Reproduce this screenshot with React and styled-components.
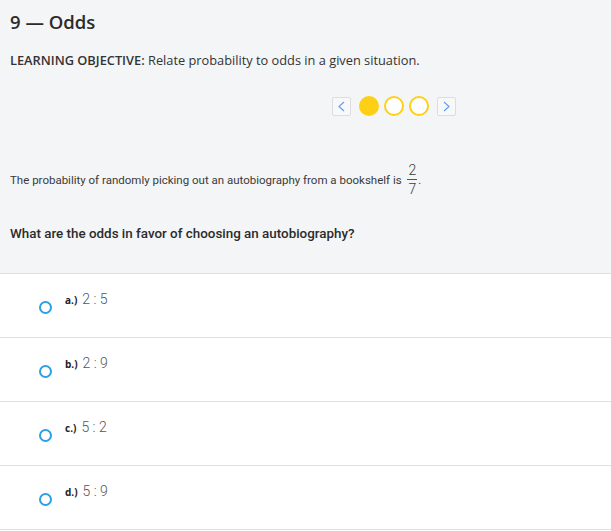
import React, { useState } from 'react';
import styled, { createGlobalStyle } from 'styled-components';

const GlobalStyle = createGlobalStyle`
  body {
    margin: 0;
    background: #ffffff;
    font-family: "Open Sans", sans-serif;
    color: #333;
  }
`;

const options = [
  { key: 'a', text: '2 : 5' },
  { key: 'b', text: '2 : 9' },
  { key: 'c', text: '5 : 2' },
  { key: 'd', text: '5 : 9' },
];

const App = () => {
  const [page, setPage] = useState(0);
  const [picked, setPicked] = useState(null);

  return (
    <>
      <GlobalStyle />
      <Header>
        <Title>9 — Odds</Title>
        <Objective>
          <b>LEARNING OBJECTIVE:</b> Relate probability to odds in a given situation.
        </Objective>
        <Pager>
          <PageButton onClick={() => setPage(Math.max(0, page - 1))}>
            <svg width="9" height="11" viewBox="0 0 9 11">
              <path d="M7 1 L2 5.5 L7 10" fill="none" stroke="#5b9bf0" strokeWidth="1.1" />
            </svg>
          </PageButton>
          {[0, 1, 2].map((i) => (
            <Dot key={i} filled={i === page} onClick={() => setPage(i)} />
          ))}
          <PageButton onClick={() => setPage(Math.min(2, page + 1))}>
            <svg width="9" height="11" viewBox="0 0 9 11">
              <path d="M2 1 L7 5.5 L2 10" fill="none" stroke="#5b9bf0" strokeWidth="1.1" />
            </svg>
          </PageButton>
        </Pager>
        <Question>
          The probability of randomly picking out an autobiography from a bookshelf is{' '}
          <Fraction>
            <span>2</span>
            <span>7</span>
          </Fraction>
          .
        </Question>
        <Ask>What are the odds in favor of choosing an autobiography?</Ask>
      </Header>
      <OptionList>
        {options.map((o) => (
          <OptionRow key={o.key} onClick={() => setPicked(o.key)}>
            <Radio checked={picked === o.key} />
            <OptionLabel>
              <b>{o.key}.)</b>
              <span>{o.text}</span>
            </OptionLabel>
          </OptionRow>
        ))}
      </OptionList>
    </>
  );
};

export default App;

/** grey question block on top */
const Header = styled.div`
  background: #f4f5f7;
  padding: 12px 10px 0;
  height: 261px;
  box-sizing: content-box;
  border-bottom: 1px solid #dfe0e2;
`;

const Title = styled.h1`
  margin: 0;
  font-family: "Open Sans", sans-serif;
  font-size: 18.5px;
  font-weight: 600;
  color: #2b2b2b;
  line-height: 20px;
`;

const Objective = styled.p`
  margin: 21px 0 0;
  font-size: 12.8px;
  line-height: 14px;
  color: #333;

  > b {
    font-weight: 600;
  }
`;

const Pager = styled.div`
  display: flex;
  align-items: center;
  gap: 5px;
  margin: 29px 0 0 319px;
`;

const PageButton = styled.button`
  width: 19px;
  height: 19px;
  padding: 0;
  display: flex;
  align-items: center;
  justify-content: center;
  background: #f8f8f9;
  border: 1.5px solid #dcdde1;
  border-radius: 2px;
  cursor: pointer;
  margin: 0 3px;
`;

const Dot = styled.span`
  width: 20px;
  height: 20px;
  box-sizing: border-box;
  border-radius: 50%;
  border: 2px solid #fdd016;
  background: ${(p) => (p.filled ? '#fdd016' : '#ffffff')};
  cursor: pointer;
`;

const Question = styled.p`
  margin: 48px 0 0;
  font-family: "Roboto", "Liberation Sans", sans-serif;
  font-size: 11.5px;
  line-height: 14px;
  color: #3a3a3a;
  display: flex;
  align-items: center;
  white-space: pre;
`;

const Fraction = styled.span`
  display: inline-flex;
  flex-direction: column;
  align-items: center;
  font-size: 14px;
  font-weight: 300;
  margin: 0 1px 0 3px;
  line-height: 12px;

  > span {
    padding: 0 1px;
  }

  > span:first-child {
    border-bottom: 1px solid #555;
    padding-bottom: 3px;
  }

  > span:last-child {
    padding-top: 3px;
  }
`;

const Ask = styled.p`
  margin: 31px 0 0;
  font-family: "Roboto", "Liberation Sans", sans-serif;
  font-size: 13.4px;
  font-weight: 500;
  color: #2b2b2b;
`;

const OptionList = styled.div`
  display: flex;
  flex-direction: column;
`;

const OptionRow = styled.div`
  height: 63px;
  border-bottom: 1px solid #dfe0e2;
  display: flex;
  align-items: flex-start;
  padding: 0 0 0 39px;
  cursor: pointer;
`;

const Radio = styled.span`
  margin-top: 27px;
  width: 13px;
  height: 13px;
  box-sizing: border-box;
  border-radius: 50%;
  border: 2px solid #2d9fe0;
  background: ${(p) => (p.checked ? '#2d9fe0' : '#ffffff')};
  box-shadow: ${(p) => (p.checked ? 'inset 0 0 0 2px #fff' : 'none')};
`;

const OptionLabel = styled.div`
  margin: 17px 0 0 13px;
  display: flex;
  align-items: baseline;
  gap: 5px;

  > b {
    font-family: "Open Sans", sans-serif;
    font-size: 10px;
    font-weight: 700;
    color: #222;
  }

  > span {
    font-family: "Roboto", "Liberation Sans", sans-serif;
    font-size: 14px;
    font-weight: 300;
    color: #555;
  }
`;
